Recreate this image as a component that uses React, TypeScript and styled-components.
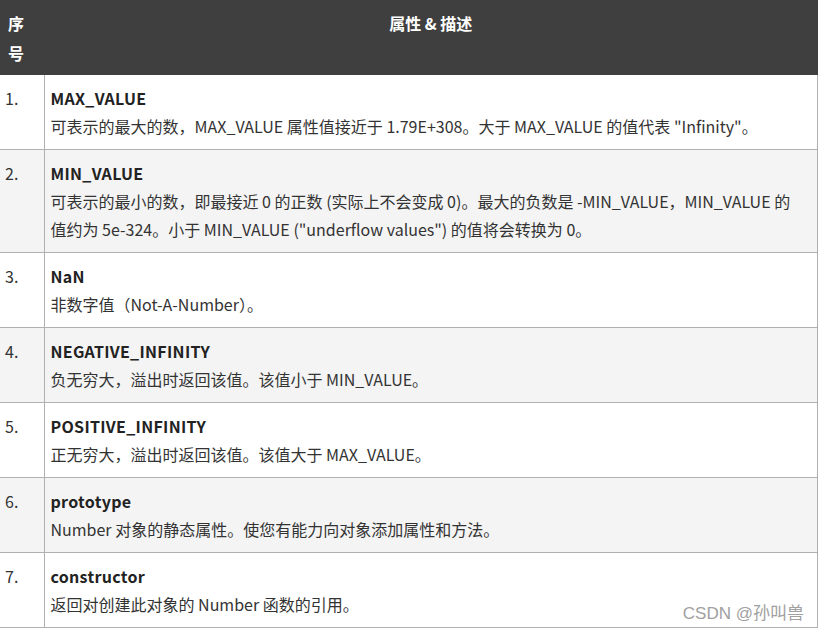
import React from "react";
import styled, { createGlobalStyle } from "styled-components";

const Global = createGlobalStyle`
  html, body { margin: 0; padding: 0; background: #fff; }
  body { font-family: "Noto Sans CJK SC", "Noto Sans", sans-serif; }
`;

const Page = styled.div`
  position: relative;
  width: 820px;
  height: 631px;
  overflow: hidden;
`;

const Table = styled.table`
  width: 818px;
  border-collapse: collapse;
  table-layout: fixed;
  font-size: 16px;
  line-height: 28px;
  color: #333;
`;

const HeadCell = styled.th<{ $w?: number }>`
  background: #3f3f3f;
  color: #fff;
  font-weight: bold;
  vertical-align: top;
  text-align: ${(p) => (p.$w ? "left" : "center")};
  padding: 8px 8px 7px;
  line-height: 30px;
  width: ${(p) => (p.$w ? `${p.$w}px` : "auto")};
  box-sizing: border-box;
`;

const Row = styled.tr<{ $alt: boolean }>`
  background: ${(p) => (p.$alt ? "#f4f4f4" : "#fff")};
  border-bottom: 1px solid #b0b0b0;
`;

const NumCell = styled.td`
  vertical-align: top;
  padding: 9px 5px;
  border-right: 1px solid #b0b0b0;
`;

const DescCell = styled.td`
  vertical-align: top;
  padding: 9px 12px 9px 6px;
  border-right: 1px solid #b0b0b0;
`;

const Title = styled.div`
  font-weight: bold;
  color: #222;
  letter-spacing: 0.3px;
`;

const Watermark = styled.div`
  position: absolute;
  right: 16px;
  bottom: 7px;
  font-family: "Liberation Sans", "Noto Sans CJK SC", sans-serif;
  font-size: 17px;
  color: #a0a0a0;
  text-shadow: 0 0 1px #fff;
`;

const rows = [
  ["MAX_VALUE", '可表示的最大的数，MAX_VALUE 属性值接近于 1.79E+308。大于 MAX_VALUE 的值代表 "Infinity"。'],
  ["MIN_VALUE", '可表示的最小的数，即最接近 0 的正数 (实际上不会变成 0)。最大的负数是 -MIN_VALUE，MIN_VALUE 的值约为 5e-324。小于 MIN_VALUE ("underflow values") 的值将会转换为 0。'],
  ["NaN", "非数字值（Not-A-Number）。"],
  ["NEGATIVE_INFINITY", "负无穷大，溢出时返回该值。该值小于 MIN_VALUE。"],
  ["POSITIVE_INFINITY", "正无穷大，溢出时返回该值。该值大于 MAX_VALUE。"],
  ["prototype", "Number 对象的静态属性。使您有能力向对象添加属性和方法。"],
  ["constructor", "返回对创建此对象的 Number 函数的引用。"],
];

export default function App() {
  return (
    <Page>
      <Global />
      <Table>
        <thead>
          <tr>
            <HeadCell $w={44}>序号</HeadCell>
            <HeadCell>属性 &amp; 描述</HeadCell>
          </tr>
        </thead>
        <tbody>
          {rows.map(([t, d], i) => (
            <Row key={t} $alt={i % 2 === 1}>
              <NumCell>{i + 1}.</NumCell>
              <DescCell>
                <Title>{t}</Title>
                <div>{d}</div>
              </DescCell>
            </Row>
          ))}
        </tbody>
      </Table>
      <Watermark>CSDN @孙叫兽</Watermark>
    </Page>
  );
}
